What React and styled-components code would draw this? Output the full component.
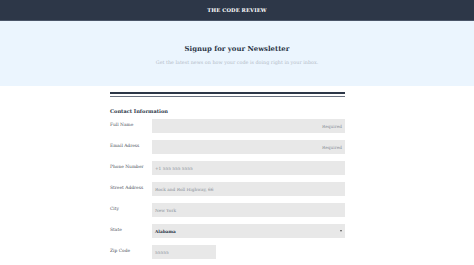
import React from "react";
import styled, { createGlobalStyle } from "styled-components";

const Global = createGlobalStyle`
  html, body { margin: 0; padding: 0; background: #fff; }
  body { font-family: "DejaVu Serif", "Liberation Serif", serif; }
  * { box-sizing: border-box; }
`;

const Header = styled.header`
  height: 21px;
  background: #2d3748;
  display: flex;
  align-items: center;
  justify-content: center;
  color: #fff;
  font-weight: bold;
  font-size: 5.2px;
  letter-spacing: 0.1px;
  border-bottom: 1px solid #4a5568;
`;

const Hero = styled.section`
  height: 65px;
  background: #ebf5fe;
  display: flex;
  flex-direction: column;
  align-items: center;
  padding-top: 22px;
`;

const Title = styled.h1`
  margin: 0;
  font-size: 6.9px;
  font-weight: bold;
  color: #2d3748;
  line-height: 12px;
`;

const Subtitle = styled.p`
  margin: 3px 0 0;
  font-size: 4.85px;
  color: #b4bcc8;
  line-height: 8px;
`;

const Container = styled.main`
  width: 235px;
  margin: 6px auto 0 110px;
`;

const Rule = styled.div`
  border-top: 2px solid #2d3748;
  height: 5px;
  border-bottom: 1px solid #6b7280;
`;

const SectionTitle = styled.h2`
  margin: 10px 0 4px;
  font-size: 5.05px;
  font-weight: bold;
  color: #2d3748;
  line-height: 8px;
`;

const Form = styled.form`
  display: flex;
  flex-direction: column;
  gap: 7px;
`;

const Row = styled.div`
  display: flex;
  align-items: flex-start;
`;

const Label = styled.label`
  width: 42px;
  flex: none;
  font-size: 4.4px;
  color: #4f5561;
  line-height: 8px;
  padding-top: 2px;
`;

const Field = styled.div`
  flex: ${(p) => (p.$short ? "none" : "1")};
  width: ${(p) => (p.$short ? "64px" : "auto")};
  height: 14px;
  background: #e8e8e8;
  display: flex;
  align-items: center;
  justify-content: ${(p) => (p.$right ? "flex-end" : "flex-start")};
  padding: 0 3px;
  font-size: 4.3px;
  color: ${(p) => (p.$dark ? "#2d3748" : "#8a9099")};
  font-weight: ${(p) => (p.$dark ? "bold" : "normal")};
`;

const Caret = styled.span`
  margin-left: auto;
  width: 0;
  height: 0;
  border-left: 1.5px solid transparent;
  border-right: 1.5px solid transparent;
  border-top: 2px solid #555;
`;

export default function App() {
  return (
    <>
      <Global />
      <Header>THE CODE REVIEW</Header>
      <Hero>
        <Title>Signup for your Newsletter</Title>
        <Subtitle>Get the latest news on how your code is doing right in your inbox.</Subtitle>
      </Hero>
      <Container>
        <Rule />
        <SectionTitle>Contact Information</SectionTitle>
        <Form>
          <Row><Label>Full Name</Label><Field $right>Required</Field></Row>
          <Row><Label>Email Adress</Label><Field $right>Required</Field></Row>
          <Row><Label>Phone Number</Label><Field>+1 555 555 5555</Field></Row>
          <Row><Label>Street Address</Label><Field>Rock and Roll Highway, 66</Field></Row>
          <Row><Label>City</Label><Field>New York</Field></Row>
          <Row><Label>State</Label><Field $dark>Alabama<Caret /></Field></Row>
          <Row><Label>Zip Code</Label><Field $short>55555</Field></Row>
        </Form>
      </Container>
    </>
  );
}
